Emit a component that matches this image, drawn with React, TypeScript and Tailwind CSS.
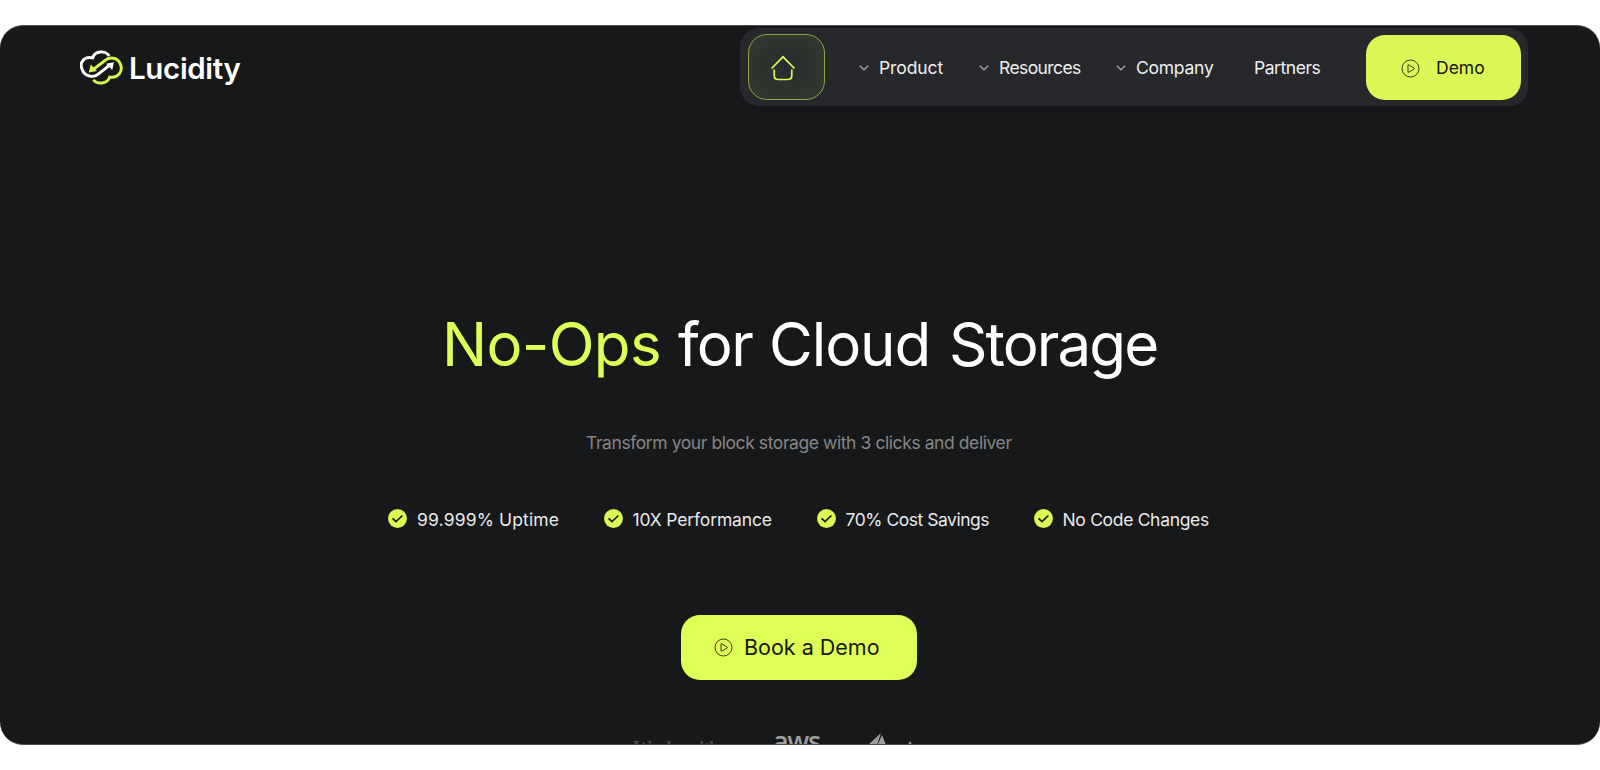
import React from "react";

const Chevron = () => (
  <svg className="h-[6px] w-[10px] shrink-0" viewBox="0 0 10 6" fill="none" stroke="#a2a3a4" strokeWidth="1.3">
    <path d="M.8 .7 5 4.8 9.2 .7" />
  </svg>
);

const Play = () => (
  <svg className="h-[19px] w-[19px] shrink-0" viewBox="0 0 19 19" fill="none" stroke="#343c1b" strokeWidth="1" strokeLinejoin="round">
    <circle cx="9.5" cy="9.5" r="8.5" />
    <path d="M7 6v7q0 .5.5.3l5.700-3.300q.6-.5 0-.9L7.500 5.700Q7 5.500 7 6Z" />
  </svg>
);

const Check = () => (
  <svg className="mb-[3px] h-[19px] w-[19px] shrink-0" viewBox="0 0 19 19" fill="none">
    <circle cx="9.500" cy="9.500" r="9.400" fill="#dcf953" />
    <path d="m4.600 9.300 3.400 3.200 6.400-6" stroke="#17181a" strokeWidth="1.700" />
  </svg>
);

const Cloud = () => (
  <svg className="h-[36px] w-[43px] shrink-0" viewBox="59 59 132 108" fill="none" strokeWidth="9">
    <path stroke="#fff" d="M149 76C138 60 105 57 98 82C70 76 56 98 66 118C72 138 99 145 115 132L149 105" />
    <path fill="#fff" d="m163 95-5 24-19-19Z" />
    <path stroke="#d8f84f" d="M100 149C110 163 143 164 150 141C177 145 192 122 183 101C175 80 149 78 136 90L100 117" />
    <path fill="#d8f84f" d="m86 127 6-25 19 20Z" />
  </svg>
);

const Home = () => (
  <svg className="mt-[2px] h-[26px] w-[26px]" viewBox="0 0 26 26" fill="none" stroke="#dcf953" strokeWidth="1.700">
    <path d="M1.500 13.500 13 1.800l11.500 11.700M4.200 14.500v6q0 4 4 4h9.600q4 0 4-4v-6" />
  </svg>
);

const NavItem = ({ label, className, chevron = true }: { label: string; className: string; chevron?: boolean }) => (
  <a className={`flex shrink-0 items-center gap-[10px] whitespace-nowrap pt-[2px] ${className}`}>
    {chevron && <Chevron />}
    <span className="pt-px">{label}</span>
  </a>
);

const Feature = ({ label, className }: { label: string; className: string }) => (
  <li className={`flex shrink-0 items-center gap-[10px] whitespace-nowrap ${className}`}>
    <Check />
    <span>{label}</span>
  </li>
);

export default function App() {
  return (
    <div className="h-[770px] w-[1600px] overflow-hidden bg-white pt-[25px] font-['Inter',sans-serif]">
      <main className="flex h-[720px] flex-col overflow-hidden rounded-[23px] border-y border-[#4c504e] bg-[#17181a]">
        <header className="flex h-[82px] shrink-0 pt-[2px]">
          <div className="flex h-[78px] w-[740px] shrink-0 items-center gap-[6px] pl-[80px] pt-[2px] text-white">
            <Cloud />
            <span className="text-[29.500px] font-semibold tracking-[-0.35px]">Lucidity</span>
          </div>
          <nav className="flex h-[78px] w-[788px] shrink-0 items-center rounded-[19px] bg-[#27282c] pl-[7.500px] text-[17.500px] text-[#eeeeef]">
            <a className="flex h-[66px] w-[77px] shrink-0 items-center justify-center rounded-[19px] border border-[#91a440] bg-[radial-gradient(ellipse_at_center,#292b2e_0%,#30352f_65%,#343a2f_100%)] pr-[6px]">
              <Home />
            </a>
            <NavItem label="Product" className="ml-[34.500px] w-[120px] tracking-[-0.1px]" />
            <NavItem label="Resources" className="w-[137px] tracking-[-0.6px]" />
            <NavItem label="Company" className="w-[138px] tracking-[-0.25px]" />
            <NavItem label="Partners" className="w-[112px] tracking-[-0.45px]" chevron={false} />
            <a className="flex h-[65px] w-[155px] shrink-0 items-center gap-[16px] rounded-[19px] bg-[#dbf756] pl-[35px] pt-[2px] text-[#17181a]">
              <Play />
              <span className="pt-px">Demo</span>
            </a>
          </nav>
        </header>

        <h1 className="mt-[196px] flex h-[80px] shrink-0 items-center whitespace-nowrap pl-[442px] text-[60px] font-normal text-white">
          <span className="w-[236px] tracking-[-0.7px] text-[#dfff56]">No-Ops</span>
          <span className="w-[91px] tracking-[-1.6px]">for</span>
          <span className="w-[180px] tracking-[-1.1px]">Cloud</span>
          <span className="tracking-[-1.9px]">Storage</span>
        </h1>

        <p className="mt-[44px] h-[30px] shrink-0 whitespace-nowrap pl-[586px] text-[17.500px] leading-[30px] tracking-[-0.42px] text-[#858687]">
          Transform your block storage with 3 clicks and deliver
        </p>

        <ul className="mt-[47px] flex h-[30px] shrink-0 items-center pl-[388px] text-[17.500px] text-[#e9e9ea]">
          <Feature label="99.999% Uptime" className="w-[215.500px] tracking-[0.15px]" />
          <Feature label="10X Performance" className="w-[213px] tracking-[-0.15px]" />
          <Feature label="70% Cost Savings" className="w-[217px] tracking-[-0.47px]" />
          <Feature label="No Code Changes" className="tracking-[-0.32px]" />
        </ul>

        <button className="ml-[681px] mt-[80px] flex h-[65px] w-[236px] shrink-0 items-center gap-[11px] whitespace-nowrap rounded-[19px] bg-[#dfff56] pl-[33px] text-[21.500px] text-[#17181a]">
          <Play />
          <span>Book a Demo</span>
        </button>

        <div className="mt-[53px] flex h-[50px] shrink-0 items-start text-[#9b9c9d]">
          <span className="ml-[633px] mt-[4px] w-[140px] font-['Liberation_Serif',serif] text-[19px] font-bold leading-[22px] tracking-[-0.9px] text-[#48494a]">Works with</span>
          <span className="-mt-[7px] w-[95px] font-['Open_Sans',sans-serif] text-[27px] font-semibold leading-[30px] tracking-[-1.3px]">aws</span>
          <svg className="h-[24px] w-[50px]" viewBox="0 0 50 24" fill="#9b9c9d">
            <path d="M13 0 0 12v12l8-9ZM14 2l-4 9 5 13h8ZM42 8l-5 9h10Z" />
          </svg>
        </div>
      </main>
    </div>
  );
}
